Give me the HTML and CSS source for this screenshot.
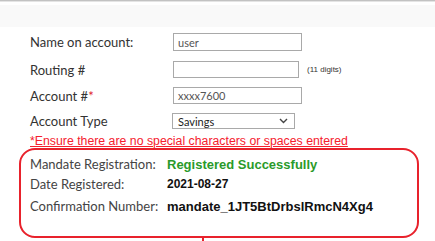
FILE: index.html
```html
<!DOCTYPE html>
<html>
<head>
<meta charset="utf-8">
<link rel="stylesheet" href="styles.css">
</head>
<body>
<div class="topline"></div>
<div class="band"></div>
<div class="form">
  <div class="row r1">
    <span class="label">Name on account:</span>
    <span class="input wide">user</span>
  </div>
  <div class="row r2">
    <span class="label">Routing #</span>
    <span class="input mid"></span>
    <span class="hint">(11 digits)</span>
  </div>
  <div class="row r3">
    <span class="label">Account #<span class="req">*</span></span>
    <span class="input wide">xxxx7600</span>
  </div>
  <div class="row r4">
    <span class="label">Account Type</span>
    <span class="select">Savings
      <svg class="chev" width="9" height="6" viewBox="0 0 9 6"><path d="M1 1 L4.5 4.5 L8 1" fill="none" stroke="#444" stroke-width="1.4"/></svg>
    </span>
  </div>
  <div class="warn">*Ensure there are no special characters or spaces entered</div>
</div>
<div class="box">
  <div class="brow b1"><span class="blabel">Mandate Registration:</span><span class="bval ok">Registered Successfully</span></div>
  <div class="brow b2"><span class="blabel">Date Registered:</span><span class="bval date">2021-08-27</span></div>
  <div class="brow b3"><span class="blabel">Confirmation Number:</span><span class="bval code">mandate_1JT5BtDrbslRmcN4Xg4</span></div>
</div>
<div class="tick"></div>
</body>
</html>
```
FILE: styles.css
```css
html, body { margin: 0; padding: 0; background: #fff; }
body { width: 435px; height: 241px; overflow: hidden; font-family: Lato, "Liberation Sans", sans-serif; }
.topline { height: 1px; background: #c2c2c2; border-bottom: 1px solid #e4e4e4; }
.band { margin-top: 3px; height: 22px; background: #f9f9f9; }
.form { padding-left: 30px; padding-top: 6px; }
.row { display: flex; align-items: center; }
.r1 { height: 18px; }
.r2 { height: 17px; margin-top: 10px; }
.r3 { height: 17px; margin-top: 9px; }
.r4 { height: 16px; margin-top: 9px; }
.label { width: 143px; font-size: 13px; color: #333; }
.req { color: #e0202a; }
.input { box-sizing: border-box; height: 100%; border: 1px solid #a9a9a9; font-size: 11px; color: #555; padding-left: 4px; display: flex; align-items: center; }
.wide { width: 129px; }
.mid { width: 126px; }
.hint { margin-left: 8px; font-family: "Liberation Sans", Arial, sans-serif; font-size: 8px; color: #333; }
.select { box-sizing: border-box; height: 100%; width: 123px; margin-left: -1px; border: 1px solid #a9a9a9; font-size: 11px; color: #222; padding-left: 5px; padding-right: 6px; display: flex; align-items: center; justify-content: space-between; }
.warn { margin-top: 6px; font-family: "Liberation Sans", Arial, sans-serif; font-size: 12.3px; color: #f5202e; text-decoration: underline; line-height: 13px; }
.box { box-sizing: border-box; margin-left: 19px; margin-top: 0; width: 400px; height: 90px; border: 2px solid #e8222c; border-radius: 16px; padding: 4px 0 0 9px; }
.brow { display: flex; align-items: center; height: 20px; }
.b3 { margin-top: 2px; }
.blabel { width: 137px; font-size: 13px; color: #444; }
.bval { font-family: "Liberation Sans", Arial, sans-serif; font-weight: bold; font-size: 13px; color: #111; }
.date { font-size: 12px; }
.ok { color: #2a9a2a; }
.tick { position: absolute; left: 202px; top: 238px; width: 2px; height: 3px; background: #e8222c; }
```
